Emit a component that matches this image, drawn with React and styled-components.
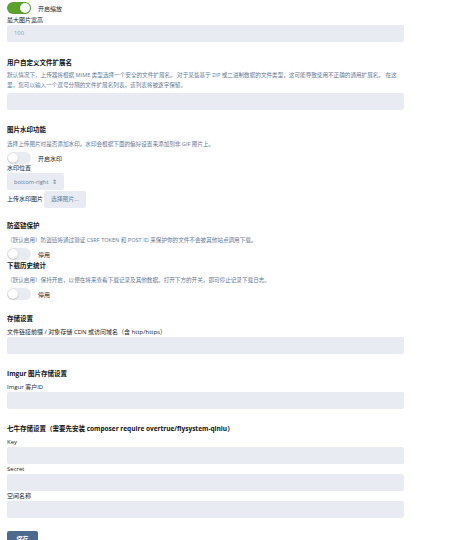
import React from "react";
import styled, { createGlobalStyle } from "styled-components";

const Global = createGlobalStyle`
  html, body { margin: 0; padding: 0; background: #fff; }
  body {
    font-family: "Open Sans", "Noto Sans CJK SC", sans-serif;
    color: #111;
    -webkit-font-smoothing: antialiased;
  }
  * { box-sizing: border-box; }
`;

const Page = styled.div`
  padding: 2px 7px 0 7px;
  width: 474px;
  height: 540px;
  overflow: hidden;
`;

const Section = styled.section`
  display: flex;
  flex-direction: column;
  align-items: flex-start;
  margin-bottom: ${(p) => p.$gap ?? 14}px;
`;

const Heading = styled.h3`
  margin: ${(p) => p.$top ?? 0}px 0 ${(p) => p.$bottom ?? 5}px 0;
  font-size: 6.5px;
  line-height: 9px;
  font-weight: 700;
  color: #111;
`;

const Help = styled.p`
  margin: 0 0 3px 0;
  font-size: 5.6px;
  line-height: 10px;
  color: #667a96;
  width: 400px;
`;

const Label = styled.label`
  display: block;
  font-size: 6px;
  line-height: 8px;
  color: #222;
  margin: ${(p) => p.$top ?? 0}px 0 1px 0;
`;

const Input = styled.div`
  width: 397px;
  height: 17px;
  border-radius: 2px;
  background: #e8ebf2;
  font-size: 5.8px;
  line-height: 17px;
  padding-left: 7px;
  color: #8e9bb0;
  margin-bottom: 1px;
`;

const SwitchRow = styled.div`
  display: flex;
  align-items: center;
  gap: 7px;
  height: 12px;
  margin-bottom: ${(p) => p.$bottom ?? 0}px;
`;

const Track = styled.span`
  position: relative;
  display: inline-block;
  width: 24px;
  height: 12px;
  border-radius: 6px;
  background: ${(p) => (p.$on ? "#5aa22e" : "#e8ebf2")};
`;

const Knob = styled.span`
  position: absolute;
  top: 1px;
  left: ${(p) => (p.$on ? "13px" : "1px")};
  width: 10px;
  height: 10px;
  border-radius: 50%;
  background: #fff;
  box-shadow: 0 0.5px 1.5px rgba(0, 0, 0, 0.3);
`;

const SwitchLabel = styled.span`
  font-size: 6px;
  color: #222;
`;

const Select = styled.div`
  display: flex;
  align-items: center;
  gap: 3px;
  height: 17px;
  padding: 0 7px;
  border-radius: 2px;
  background: #e8ebf2;
  font-size: 5.8px;
  color: #667c99;
  margin-bottom: 1px;
`;

const Row = styled.div`
  display: flex;
  align-items: center;
  gap: 1px;
`;

const GhostButton = styled.div`
  height: 17px;
  line-height: 17px;
  padding: 0 7px;
  border-radius: 2px;
  background: #e8ebf2;
  font-size: 5.8px;
  color: #667c99;
`;

const SaveButton = styled.div`
  width: 31px;
  height: 17px;
  line-height: 17px;
  border-radius: 2px;
  background: #4d698e;
  color: #fff;
  text-align: center;
  font-size: 6px;
  font-weight: 700;
`;

function Switch({ on, label, bottom }) {
  return (
    <SwitchRow $bottom={bottom}>
      <Track $on={on}>
        <Knob $on={on} />
      </Track>
      <SwitchLabel>{label}</SwitchLabel>
    </SwitchRow>
  );
}

function Field({ label, value }) {
  return (
    <>
      <Label>{label}</Label>
      <Input>{value}</Input>
    </>
  );
}

export default function App() {
  return (
    <Page>
      <Global />
      <Section $gap={15}>
        <Switch on label="开启缩放" bottom={2} />
        <Field label="最大图片宽高" value="100" />
      </Section>

      <Section>
        <Heading $bottom={3}>用户自定义文件扩展名</Heading>
        <Help>
          默认情况下，上传器将根据 MIME 类型选择一个安全的文件扩展名。 对于某些基于 ZIP 或二进制数据的文件类型，这可能导致使用不正确的通用扩展名。 在这里，您可以输入一个逗号分隔的文件扩展名列表，该列表将被逐字保留。
        </Help>
        <Input />
      </Section>

      <Section $gap={13}>
        <Heading>图片水印功能</Heading>
        <Help>选择上传图片时是否添加水印。水印会根据下面的偏好设置来添加到非 GIF 图片上。</Help>
        <Switch label="开启水印" />
        <Label>水印位置</Label>
        <Select>
          bottom-right <span>⇕</span>
        </Select>
        <Row>
          <Label as="span">上传水印图片</Label>
          <GhostButton>选择图片...</GhostButton>
        </Row>
      </Section>

      <Section>
        <Heading>防盗链保护</Heading>
        <Help>（默认启用）防盗链将通过验证 CSRF TOKEN 和 POST ID 来保护你的文件不会被其他站点调用下载。</Help>
        <Switch label="停用" bottom={1} />
        <Heading>下载历史统计</Heading>
        <Help>（默认启用）保持开启，以便在将来查看下载记录及其他数据。打开下方的开关，即可停止记录下载日志。</Help>
        <Switch label="停用" />
      </Section>

      <Section>
        <Heading>存储设置</Heading>
        <Field label="文件链接前缀 / 对象存储 CDN 或访问域名（含 http/https）" />
      </Section>

      <Section>
        <Heading>Imgur 图片存储设置</Heading>
        <Field label="Imgur 客户ID" />
      </Section>

      <Section $gap={12}>
        <Heading>七牛存储设置（需要先安装 composer require overtrue/flysystem-qiniu）</Heading>
        <Field label="Key" />
        <Field label="Secret" />
        <Field label="空间名称" />
      </Section>

      <SaveButton>保存</SaveButton>
    </Page>
  );
}
